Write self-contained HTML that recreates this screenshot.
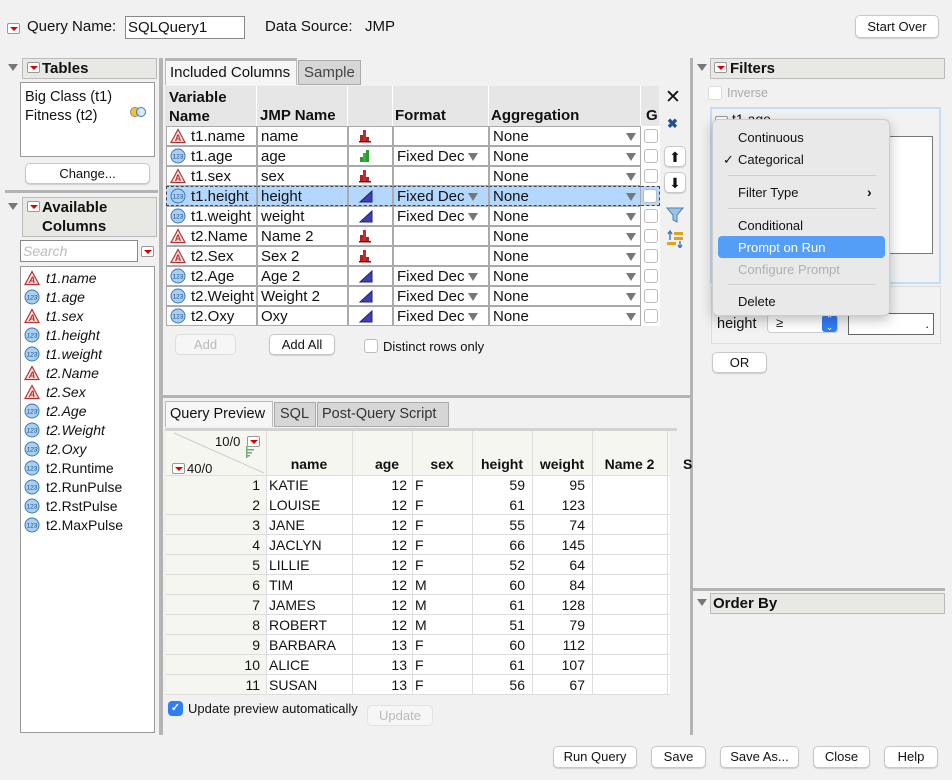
<!DOCTYPE html>
<html><head><meta charset="utf-8"><style>
*{box-sizing:border-box;margin:0;padding:0}
body{width:952px;height:780px;background:#f1f1f1;font-family:"Liberation Sans",Arial,sans-serif;color:#111;position:relative;overflow:hidden}
.a{position:absolute}
.dd{position:absolute;width:13px;height:11px;background:#fff;border:1px solid #999;border-radius:2px}
.dd:after{content:"";position:absolute;left:2px;top:3px;border-left:4px solid transparent;border-right:4px solid transparent;border-top:4px solid #d00}
.btn{position:absolute;background:#fff;border:1px solid #c8c8c8;border-radius:5px;font-size:13px;text-align:center;box-shadow:0 1px 1px rgba(0,0,0,.15)}
.hdr{position:absolute;background:#e8e8e4;border:1px solid #bbb;font-weight:bold;font-size:15px}
.tri{position:absolute;width:0;height:0;border-left:5px solid transparent;border-right:5px solid transparent;border-top:7px solid #777}
.cell{position:absolute;height:20px;background:#fff;border:1px solid #aaa;font-size:15px;line-height:19px;padding-left:3px;white-space:nowrap;overflow:hidden}
.sel{background:#b3d7ff}
.dt{position:absolute;right:4px;top:6px;border-left:5px solid transparent;border-right:5px solid transparent;border-top:8px solid #777}
.cb{position:absolute;width:14px;height:14px;border:1px solid #bbb;border-radius:3px;background:#fff}
.li{position:absolute;left:24px;font-size:14px;font-style:italic;height:19px;line-height:19px}
.li svg{vertical-align:-3px;margin-right:6px}
.mi{position:absolute;left:25px;font-size:13px}
</style></head><body>

<div class="dd" style="left:7px;top:23px"></div>
<div class="a" style="left:27px;top:18px;font-size:15px">Query Name:</div>
<div class="a" style="left:125px;top:16px;width:120px;height:23px;background:#fff;border:1px solid #888;font-size:15px;padding:2px 2px">SQLQuery1</div>
<div class="a" style="left:265px;top:18px;font-size:15px">Data Source:&nbsp;&nbsp; JMP</div>
<div class="btn" style="left:855px;top:15px;width:84px;height:23px;line-height:21px">Start Over</div>

<div class="a" style="left:159px;top:58px;width:4px;height:677px;background:#b4b4b4"></div>
<div class="a" style="left:690px;top:58px;width:3px;height:677px;background:#b4b4b4"></div>
<div class="a" style="left:5px;top:190px;width:153px;height:3px;background:#b4b4b4"></div>
<div class="a" style="left:163px;top:395px;width:527px;height:3px;background:#b4b4b4"></div>
<div class="a" style="left:693px;top:588px;width:252px;height:3px;background:#b4b4b4"></div>

<div class="tri" style="left:8px;top:64px"></div>
<div class="hdr" style="left:22px;top:58px;width:135px;height:21px;padding-left:19px;line-height:19px">Tables</div>
<div class="dd" style="left:27px;top:62px"></div>
<div class="a" style="left:20px;top:82px;width:135px;height:75px;background:#fff;border:1px solid #999;font-size:14.5px;padding:5px 4px;line-height:19px">Big Class (t1)<br>Fitness (t2)</div>
<svg class="a" style="left:129px;top:106px" width="18" height="12"><circle cx="6" cy="6" r="4.5" fill="#f3c623" stroke="#888"/><circle cx="12" cy="6" r="4.5" fill="#cfe3f7" fill-opacity=".8" stroke="#3a78c0"/></svg>
<div class="btn" style="left:25px;top:163px;width:125px;height:21px;line-height:19px">Change...</div>

<div class="tri" style="left:8px;top:203px"></div>
<div class="hdr" style="left:22px;top:197px;width:135px;height:40px;padding-left:19px;line-height:19px">Available<br>Columns</div>
<div class="dd" style="left:27px;top:201px"></div>
<div class="a" style="left:20px;top:240px;width:118px;height:22px;background:#fff;border:1px solid #888;font-size:14px;color:#bbb;font-style:italic;padding:2px 2px">Search</div>
<div class="dd" style="left:141px;top:246px"></div>
<div class="a" style="left:20px;top:266px;width:135px;height:467px;background:#fff;border:1px solid #999"></div>

<svg width="0" height="0" style="position:absolute"><defs>
<g id="ia"><path d="M8 1.5L15 14.5H1Z" fill="#fbe3e3" stroke="#b83030" stroke-width="1.2"/><text x="8" y="13" font-size="9" font-family="Liberation Sans" font-weight="bold" text-anchor="middle" fill="#b83030">A</text></g>
<g id="in"><circle cx="8" cy="8" r="7" fill="#a9cff2" stroke="#3a78c0"/><text x="8" y="10.5" font-size="6.5" font-family="Liberation Sans" text-anchor="middle" fill="#1d4f90">123</text></g>
<g id="nom"><rect x="2" y="7" width="3" height="7" fill="#b02020"/><rect x="5" y="2" width="3" height="12" fill="#c03030"/><rect x="8" y="9" width="3" height="5" fill="#b02020"/><rect x="1" y="13" width="12" height="1.5" fill="#801010"/></g>
<g id="ord"><rect x="2" y="9" width="3" height="5" fill="#2a9a2a"/><rect x="5" y="5" width="3" height="9" fill="#38b038"/><rect x="8" y="2" width="3" height="12" fill="#2a9a2a"/></g>
<g id="con"><path d="M2 14L14 14L14 3Z" fill="#4040b0" stroke="#202080"/></g>
</defs></svg>

<div class="li" style="top:269px"><svg width="16" height="16"><use href="#ia"/></svg>t1.name</div>
<div class="li" style="top:288px"><svg width="16" height="16"><use href="#in"/></svg>t1.age</div>
<div class="li" style="top:307px"><svg width="16" height="16"><use href="#ia"/></svg>t1.sex</div>
<div class="li" style="top:326px"><svg width="16" height="16"><use href="#in"/></svg>t1.height</div>
<div class="li" style="top:345px"><svg width="16" height="16"><use href="#in"/></svg>t1.weight</div>
<div class="li" style="top:364px"><svg width="16" height="16"><use href="#ia"/></svg>t2.Name</div>
<div class="li" style="top:383px"><svg width="16" height="16"><use href="#ia"/></svg>t2.Sex</div>
<div class="li" style="top:402px"><svg width="16" height="16"><use href="#in"/></svg>t2.Age</div>
<div class="li" style="top:421px"><svg width="16" height="16"><use href="#in"/></svg>t2.Weight</div>
<div class="li" style="top:440px"><svg width="16" height="16"><use href="#in"/></svg>t2.Oxy</div>
<div class="li" style="top:459px;font-style:normal"><svg width="16" height="16"><use href="#in"/></svg>t2.Runtime</div>
<div class="li" style="top:478px;font-style:normal"><svg width="16" height="16"><use href="#in"/></svg>t2.RunPulse</div>
<div class="li" style="top:497px;font-style:normal"><svg width="16" height="16"><use href="#in"/></svg>t2.RstPulse</div>
<div class="li" style="top:516px;font-style:normal"><svg width="16" height="16"><use href="#in"/></svg>t2.MaxPulse</div>

<div class="a" style="left:165px;top:58px;width:132px;height:27px;background:#f6f6f6;border:1px solid #bbb;border-top:3px solid #b4b4b4;border-bottom:none;font-size:15px;padding:3px 4px">Included Columns</div>
<div class="a" style="left:298px;top:60px;width:63px;height:25px;background:#d6d6d6;border:1px solid #aaa;font-size:15px;padding:3px 5px;color:#444">Sample</div>
<div class="a" style="left:165px;top:86px;width:494px;height:40px;background:#e6e6e6"></div>
<div class="a" style="left:169px;top:88px;font-size:15px;font-weight:bold;line-height:19px">Variable<br>Name</div>
<div class="a" style="left:260px;top:107px;font-size:15px;font-weight:bold">JMP Name</div>
<div class="a" style="left:395px;top:107px;font-size:15px;font-weight:bold">Format</div>
<div class="a" style="left:491px;top:107px;font-size:15px;font-weight:bold">Aggregation</div>
<div class="a" style="left:646px;top:107px;font-size:15px;font-weight:bold">G</div>
<div class="a" style="left:256px;top:86px;width:1px;height:40px;background:#fff"></div>
<div class="a" style="left:347px;top:86px;width:1px;height:40px;background:#fff"></div>
<div class="a" style="left:392px;top:86px;width:1px;height:40px;background:#fff"></div>
<div class="a" style="left:488px;top:86px;width:1px;height:40px;background:#fff"></div>
<div class="a" style="left:640px;top:86px;width:1px;height:40px;background:#fff"></div>

<div class="a" style="left:166px;top:126px;width:493px;height:200px;background:#fff"></div>

<div class="cell" style="left:166px;top:126px;width:91px"><svg width="16" height="16" style="vertical-align:-3px;margin-right:5px"><use href="#ia"/></svg>t1.name</div>
<div class="cell" style="left:257px;top:126px;width:91px">name</div>
<div class="cell" style="left:348px;top:126px;width:45px;padding-left:9px"><svg width="16" height="16" style="vertical-align:-3px"><use href="#nom"/></svg></div>
<div class="cell" style="left:393px;top:126px;width:96px"></div>
<div class="cell" style="left:489px;top:126px;width:152px">None<span class="dt"></span></div>
<div class="cell" style="left:641px;top:126px;width:19px;border-color:#fff"><span class="cb" style="left:2px;top:2px"></span></div>
<div class="cell" style="left:166px;top:146px;width:91px"><svg width="16" height="16" style="vertical-align:-3px;margin-right:5px"><use href="#in"/></svg>t1.age</div>
<div class="cell" style="left:257px;top:146px;width:91px">age</div>
<div class="cell" style="left:348px;top:146px;width:45px;padding-left:9px"><svg width="16" height="16" style="vertical-align:-3px"><use href="#ord"/></svg></div>
<div class="cell" style="left:393px;top:146px;width:96px">Fixed Dec<span class="dt" style="right:10px"></span></div>
<div class="cell" style="left:489px;top:146px;width:152px">None<span class="dt"></span></div>
<div class="cell" style="left:641px;top:146px;width:19px;border-color:#fff"><span class="cb" style="left:2px;top:2px"></span></div>
<div class="cell" style="left:166px;top:166px;width:91px"><svg width="16" height="16" style="vertical-align:-3px;margin-right:5px"><use href="#ia"/></svg>t1.sex</div>
<div class="cell" style="left:257px;top:166px;width:91px">sex</div>
<div class="cell" style="left:348px;top:166px;width:45px;padding-left:9px"><svg width="16" height="16" style="vertical-align:-3px"><use href="#nom"/></svg></div>
<div class="cell" style="left:393px;top:166px;width:96px"></div>
<div class="cell" style="left:489px;top:166px;width:152px">None<span class="dt"></span></div>
<div class="cell" style="left:641px;top:166px;width:19px;border-color:#fff"><span class="cb" style="left:2px;top:2px"></span></div>
<div class="cell sel" style="left:166px;top:186px;width:91px;border:1px dashed #444;border-right:1px solid #aaa"><svg width="16" height="16" style="vertical-align:-3px;margin-right:5px"><use href="#in"/></svg>t1.height</div>
<div class="cell sel" style="left:257px;top:186px;width:91px;border-top:1px dashed #444;border-bottom:1px dashed #444">height</div>
<div class="cell sel" style="left:348px;top:186px;width:45px;padding-left:9px;border-top:1px dashed #444;border-bottom:1px dashed #444"><svg width="16" height="16" style="vertical-align:-3px"><use href="#con"/></svg></div>
<div class="cell sel" style="left:393px;top:186px;width:96px;border-top:1px dashed #444;border-bottom:1px dashed #444">Fixed Dec<span class="dt" style="right:10px"></span></div>
<div class="cell sel" style="left:489px;top:186px;width:152px;border-top:1px dashed #444;border-bottom:1px dashed #444">None<span class="dt"></span></div>
<div class="cell sel" style="left:641px;top:186px;width:19px;border:1px dashed #444;border-left:none"><span class="cb" style="left:2px;top:2px"></span></div>
<div class="cell" style="left:166px;top:206px;width:91px"><svg width="16" height="16" style="vertical-align:-3px;margin-right:5px"><use href="#in"/></svg>t1.weight</div>
<div class="cell" style="left:257px;top:206px;width:91px">weight</div>
<div class="cell" style="left:348px;top:206px;width:45px;padding-left:9px"><svg width="16" height="16" style="vertical-align:-3px"><use href="#con"/></svg></div>
<div class="cell" style="left:393px;top:206px;width:96px">Fixed Dec<span class="dt" style="right:10px"></span></div>
<div class="cell" style="left:489px;top:206px;width:152px">None<span class="dt"></span></div>
<div class="cell" style="left:641px;top:206px;width:19px;border-color:#fff"><span class="cb" style="left:2px;top:2px"></span></div>
<div class="cell" style="left:166px;top:226px;width:91px"><svg width="16" height="16" style="vertical-align:-3px;margin-right:5px"><use href="#ia"/></svg>t2.Name</div>
<div class="cell" style="left:257px;top:226px;width:91px">Name 2</div>
<div class="cell" style="left:348px;top:226px;width:45px;padding-left:9px"><svg width="16" height="16" style="vertical-align:-3px"><use href="#nom"/></svg></div>
<div class="cell" style="left:393px;top:226px;width:96px"></div>
<div class="cell" style="left:489px;top:226px;width:152px">None<span class="dt"></span></div>
<div class="cell" style="left:641px;top:226px;width:19px;border-color:#fff"><span class="cb" style="left:2px;top:2px"></span></div>
<div class="cell" style="left:166px;top:246px;width:91px"><svg width="16" height="16" style="vertical-align:-3px;margin-right:5px"><use href="#ia"/></svg>t2.Sex</div>
<div class="cell" style="left:257px;top:246px;width:91px">Sex 2</div>
<div class="cell" style="left:348px;top:246px;width:45px;padding-left:9px"><svg width="16" height="16" style="vertical-align:-3px"><use href="#nom"/></svg></div>
<div class="cell" style="left:393px;top:246px;width:96px"></div>
<div class="cell" style="left:489px;top:246px;width:152px">None<span class="dt"></span></div>
<div class="cell" style="left:641px;top:246px;width:19px;border-color:#fff"><span class="cb" style="left:2px;top:2px"></span></div>
<div class="cell" style="left:166px;top:266px;width:91px"><svg width="16" height="16" style="vertical-align:-3px;margin-right:5px"><use href="#in"/></svg>t2.Age</div>
<div class="cell" style="left:257px;top:266px;width:91px">Age 2</div>
<div class="cell" style="left:348px;top:266px;width:45px;padding-left:9px"><svg width="16" height="16" style="vertical-align:-3px"><use href="#con"/></svg></div>
<div class="cell" style="left:393px;top:266px;width:96px">Fixed Dec<span class="dt" style="right:10px"></span></div>
<div class="cell" style="left:489px;top:266px;width:152px">None<span class="dt"></span></div>
<div class="cell" style="left:641px;top:266px;width:19px;border-color:#fff"><span class="cb" style="left:2px;top:2px"></span></div>
<div class="cell" style="left:166px;top:286px;width:91px"><svg width="16" height="16" style="vertical-align:-3px;margin-right:5px"><use href="#in"/></svg>t2.Weight</div>
<div class="cell" style="left:257px;top:286px;width:91px">Weight 2</div>
<div class="cell" style="left:348px;top:286px;width:45px;padding-left:9px"><svg width="16" height="16" style="vertical-align:-3px"><use href="#con"/></svg></div>
<div class="cell" style="left:393px;top:286px;width:96px">Fixed Dec<span class="dt" style="right:10px"></span></div>
<div class="cell" style="left:489px;top:286px;width:152px">None<span class="dt"></span></div>
<div class="cell" style="left:641px;top:286px;width:19px;border-color:#fff"><span class="cb" style="left:2px;top:2px"></span></div>
<div class="cell" style="left:166px;top:306px;width:91px"><svg width="16" height="16" style="vertical-align:-3px;margin-right:5px"><use href="#in"/></svg>t2.Oxy</div>
<div class="cell" style="left:257px;top:306px;width:91px">Oxy</div>
<div class="cell" style="left:348px;top:306px;width:45px;padding-left:9px"><svg width="16" height="16" style="vertical-align:-3px"><use href="#con"/></svg></div>
<div class="cell" style="left:393px;top:306px;width:96px">Fixed Dec<span class="dt" style="right:10px"></span></div>
<div class="cell" style="left:489px;top:306px;width:152px">None<span class="dt"></span></div>
<div class="cell" style="left:641px;top:306px;width:19px;border-color:#fff"><span class="cb" style="left:2px;top:2px"></span></div>

<div class="a" style="left:665px;top:88px;font-size:19px;line-height:20px">✕</div>
<div class="a" style="left:667px;top:115px;font-size:13px;color:#1e4f9a;font-weight:bold;line-height:18px">✖</div>
<div class="btn" style="left:664px;top:146px;width:22px;height:21px;font-size:14px;line-height:20px">⬆</div>
<div class="btn" style="left:664px;top:172px;width:22px;height:21px;font-size:14px;line-height:20px">⬇</div>
<svg class="a" style="left:666px;top:205px" width="18" height="18"><path d="M1 3H17L11 10V17L7 15V10Z" fill="#9bc4e8" stroke="#4a7fb8"/></svg>
<svg class="a" style="left:666px;top:230px" width="18" height="18"><rect x="8" y="2" width="9" height="3" fill="#e0a020"/><rect x="8" y="7" width="9" height="3" fill="#e0a020"/><rect x="1" y="12" width="9" height="3" fill="#e0a020"/><path d="M4 10V2M2 4L4 1L6 4" stroke="#3a78c0" fill="none" stroke-width="1.4"/><path d="M14 11V17M12 15L14 18L16 15" stroke="#3a78c0" fill="none" stroke-width="1.4"/></svg>

<div class="btn" style="left:175px;top:334px;width:61px;height:21px;line-height:19px;color:#bbb;box-shadow:none;border-color:#ddd;background:#f6f6f6">Add</div>
<div class="btn" style="left:269px;top:334px;width:66px;height:21px;line-height:19px">Add All</div>
<span class="cb" style="left:364px;top:339px"></span>
<div class="a" style="left:383px;top:339px;font-size:13px">Distinct rows only</div>

<div class="a" style="left:165px;top:401px;width:108px;height:26px;background:#f6f6f6;border:1px solid #bbb;border-bottom:none;font-size:14.5px;padding:4px 4px">Query Preview</div>
<div class="a" style="left:274px;top:402px;width:42px;height:25px;background:#d6d6d6;border:1px solid #aaa;font-size:14.5px;padding:3px 5px;color:#333">SQL</div>
<div class="a" style="left:317px;top:402px;width:132px;height:25px;background:#d6d6d6;border:1px solid #aaa;font-size:14.5px;padding:3px 4px;color:#333">Post-Query Script</div>
<div class="a" style="left:165px;top:428px;width:512px;height:3px;background:#d2d2d2"></div>
<div class="a" style="left:166px;top:431px;width:504px;height:264px;background:#fff"></div>
<div class="a" style="left:166px;top:431px;width:100px;height:264px;background:#f6f6f1"></div>
<div class="a" style="left:266px;top:431px;width:404px;height:44px;background:#f6f6f1"></div>
<svg class="a" style="left:166px;top:431px" width="100" height="44"><line x1="8" y1="2" x2="98" y2="42" stroke="#ccc"/><rect x="80" y="18" width="8" height="1.5" fill="#7a7"/><rect x="80" y="21" width="6" height="1.5" fill="#7a7"/><rect x="80" y="24" width="4" height="1.5" fill="#7a7"/><rect x="80" y="15" width="1.5" height="12" fill="#7a7"/></svg>
<div class="a" style="left:215px;top:434px;font-size:13px">10/0</div>
<div class="dd" style="left:247px;top:436px"></div>
<div class="dd" style="left:172px;top:463px"></div>
<div class="a" style="left:187px;top:461px;font-size:13px">40/0</div>
<div class="a" style="left:266px;top:431px;width:1px;height:264px;background:#ddd"></div>
<div class="a" style="left:352px;top:431px;width:1px;height:264px;background:#ddd"></div>
<div class="a" style="left:412px;top:431px;width:1px;height:264px;background:#ddd"></div>
<div class="a" style="left:472px;top:431px;width:1px;height:264px;background:#ddd"></div>
<div class="a" style="left:532px;top:431px;width:1px;height:264px;background:#ddd"></div>
<div class="a" style="left:592px;top:431px;width:1px;height:264px;background:#ddd"></div>
<div class="a" style="left:667px;top:431px;width:1px;height:264px;background:#ddd"></div>
<div class="a" style="left:266px;top:456px;width:86px;text-align:center;font-size:14px;font-weight:bold">name</div>
<div class="a" style="left:352px;top:456px;width:60px;text-align:center;font-size:14px;font-weight:bold;padding-left:10px">age</div>
<div class="a" style="left:412px;top:456px;width:60px;text-align:center;font-size:14px;font-weight:bold">sex</div>
<div class="a" style="left:472px;top:456px;width:60px;text-align:center;font-size:14px;font-weight:bold">height</div>
<div class="a" style="left:532px;top:456px;width:60px;text-align:center;font-size:14px;font-weight:bold">weight</div>
<div class="a" style="left:592px;top:456px;width:75px;text-align:center;font-size:14px;font-weight:bold">Name 2</div>
<div class="a" style="left:683px;top:456px;font-size:14px;font-weight:bold">S</div>
<div class="a" style="left:166px;top:475px;width:504px;line-height:20px;font-size:14px">
<table style="border-collapse:collapse;font-size:14px">
<tr><td style="width:100px;text-align:right;padding-right:6px">1</td><td style="width:86px;padding-left:3px">KATIE</td><td style="width:60px;text-align:right;padding-right:5px">12</td><td style="width:60px;padding-left:3px">F</td><td style="width:60px;text-align:right;padding-right:7px">59</td><td style="width:60px;text-align:right;padding-right:7px">95</td></tr>
<tr><td style="text-align:right;padding-right:6px">2</td><td style="padding-left:3px">LOUISE</td><td style="text-align:right;padding-right:5px">12</td><td style="padding-left:3px">F</td><td style="text-align:right;padding-right:7px">61</td><td style="text-align:right;padding-right:7px">123</td></tr>
<tr><td style="text-align:right;padding-right:6px">3</td><td style="padding-left:3px">JANE</td><td style="text-align:right;padding-right:5px">12</td><td style="padding-left:3px">F</td><td style="text-align:right;padding-right:7px">55</td><td style="text-align:right;padding-right:7px">74</td></tr>
<tr><td style="text-align:right;padding-right:6px">4</td><td style="padding-left:3px">JACLYN</td><td style="text-align:right;padding-right:5px">12</td><td style="padding-left:3px">F</td><td style="text-align:right;padding-right:7px">66</td><td style="text-align:right;padding-right:7px">145</td></tr>
<tr><td style="text-align:right;padding-right:6px">5</td><td style="padding-left:3px">LILLIE</td><td style="text-align:right;padding-right:5px">12</td><td style="padding-left:3px">F</td><td style="text-align:right;padding-right:7px">52</td><td style="text-align:right;padding-right:7px">64</td></tr>
<tr><td style="text-align:right;padding-right:6px">6</td><td style="padding-left:3px">TIM</td><td style="text-align:right;padding-right:5px">12</td><td style="padding-left:3px">M</td><td style="text-align:right;padding-right:7px">60</td><td style="text-align:right;padding-right:7px">84</td></tr>
<tr><td style="text-align:right;padding-right:6px">7</td><td style="padding-left:3px">JAMES</td><td style="text-align:right;padding-right:5px">12</td><td style="padding-left:3px">M</td><td style="text-align:right;padding-right:7px">61</td><td style="text-align:right;padding-right:7px">128</td></tr>
<tr><td style="text-align:right;padding-right:6px">8</td><td style="padding-left:3px">ROBERT</td><td style="text-align:right;padding-right:5px">12</td><td style="padding-left:3px">M</td><td style="text-align:right;padding-right:7px">51</td><td style="text-align:right;padding-right:7px">79</td></tr>
<tr><td style="text-align:right;padding-right:6px">9</td><td style="padding-left:3px">BARBARA</td><td style="text-align:right;padding-right:5px">13</td><td style="padding-left:3px">F</td><td style="text-align:right;padding-right:7px">60</td><td style="text-align:right;padding-right:7px">112</td></tr>
<tr><td style="text-align:right;padding-right:6px">10</td><td style="padding-left:3px">ALICE</td><td style="text-align:right;padding-right:5px">13</td><td style="padding-left:3px">F</td><td style="text-align:right;padding-right:7px">61</td><td style="text-align:right;padding-right:7px">107</td></tr>
<tr><td style="text-align:right;padding-right:6px">11</td><td style="padding-left:3px">SUSAN</td><td style="text-align:right;padding-right:5px">13</td><td style="padding-left:3px">F</td><td style="text-align:right;padding-right:7px">56</td><td style="text-align:right;padding-right:7px">67</td></tr>
</table></div>
<div class="a" style="left:166px;top:495px;width:504px;height:200px;background:repeating-linear-gradient(to bottom,transparent 0,transparent 19px,#ddd 19px,#ddd 20px)"></div>
<div class="a" style="left:166px;top:475px;width:504px;height:1px;background:#ddd"></div>
<div class="a" style="left:168px;top:701px;width:15px;height:15px;border-radius:4px;background:#2f7ef6;color:#fff;font-size:11px;text-align:center;line-height:15px;font-weight:bold">✓</div>
<div class="a" style="left:188px;top:701px;font-size:13px">Update preview automatically</div>
<div class="btn" style="left:367px;top:705px;width:66px;height:21px;line-height:19px;color:#bbb;box-shadow:none;border-color:#e2e2e2;background:#f6f6f6">Update</div>

<div class="btn" style="left:553px;top:746px;width:84px;height:22px;line-height:20px">Run Query</div>
<div class="btn" style="left:651px;top:746px;width:55px;height:22px;line-height:20px">Save</div>
<div class="btn" style="left:720px;top:746px;width:79px;height:22px;line-height:20px">Save As...</div>
<div class="btn" style="left:813px;top:746px;width:57px;height:22px;line-height:20px">Close</div>
<div class="btn" style="left:884px;top:746px;width:54px;height:22px;line-height:20px">Help</div>

<div class="tri" style="left:697px;top:64px"></div>
<div class="hdr" style="left:710px;top:58px;width:235px;height:21px;padding-left:19px;line-height:19px">Filters</div>
<div class="dd" style="left:714px;top:62px"></div>
<span class="cb" style="left:708px;top:86px;border-color:#ddd"></span>
<div class="a" style="left:727px;top:86px;font-size:12.5px;color:#aaa">Inverse</div>
<div class="a" style="left:710px;top:107px;width:231px;height:177px;border:2px solid #c5dcf6;background:#f2f2f2"></div>
<div class="dd" style="left:715px;top:116px"></div>
<div class="a" style="left:732px;top:111px;font-size:14px">t1.age</div>
<div class="a" style="left:880px;top:136px;width:53px;height:118px;background:#fff;border:1px solid #777"></div>
<div class="a" style="left:711px;top:286px;width:230px;height:58px;border:1px solid #ddd;background:#f2f2f2"></div>
<div class="a" style="left:717px;top:316px;font-size:14.5px">height</div>
<div class="a" style="left:767px;top:314px;width:71px;height:19px;background:#fff;border:1px solid #ccc;border-radius:4px;font-size:13px;padding-left:8px">≥</div>
<div class="a" style="left:822px;top:315px;width:15px;height:17px;background:#2f7ef6;border-radius:3px;color:#fff;font-size:9px;text-align:center;line-height:8px">⌃<br>⌄</div>
<div class="a" style="left:848px;top:313px;width:86px;height:22px;background:#fff;border:1px solid #666;font-size:13px;text-align:right;padding-right:4px;line-height:20px">.</div>
<div class="btn" style="left:712px;top:352px;width:55px;height:21px;line-height:19px">OR</div>

<div class="a" style="left:712px;top:119px;width:178px;height:197px;background:#e9e9e9;border:1px solid #ccc;border-radius:6px;box-shadow:0 4px 12px rgba(0,0,0,.25)">
<div class="mi" style="top:10px">Continuous</div>
<div class="a" style="left:10px;top:32px;font-size:13px">✓</div>
<div class="mi" style="top:32px">Categorical</div>
<div class="a" style="left:15px;top:55px;width:148px;height:1px;background:#d0d0d0"></div>
<div class="mi" style="top:65px">Filter Type</div>
<div class="a" style="left:154px;top:64px;font-size:14px;font-weight:bold">›</div>
<div class="a" style="left:15px;top:88px;width:148px;height:1px;background:#d0d0d0"></div>
<div class="mi" style="top:98px">Conditional</div>
<div class="a" style="left:5px;top:116px;width:167px;height:22px;background:#559ef8;border-radius:4px"></div>
<div class="mi" style="top:120px;color:#fff">Prompt on Run</div>
<div class="mi" style="top:142px;color:#b0b0b0">Configure Prompt</div>
<div class="a" style="left:15px;top:164px;width:148px;height:1px;background:#d0d0d0"></div>
<div class="mi" style="top:174px">Delete</div>
</div>

<div class="tri" style="left:697px;top:599px"></div>
<div class="hdr" style="left:710px;top:593px;width:235px;height:21px;padding-left:2px;line-height:19px">Order By</div>
</body></html>
